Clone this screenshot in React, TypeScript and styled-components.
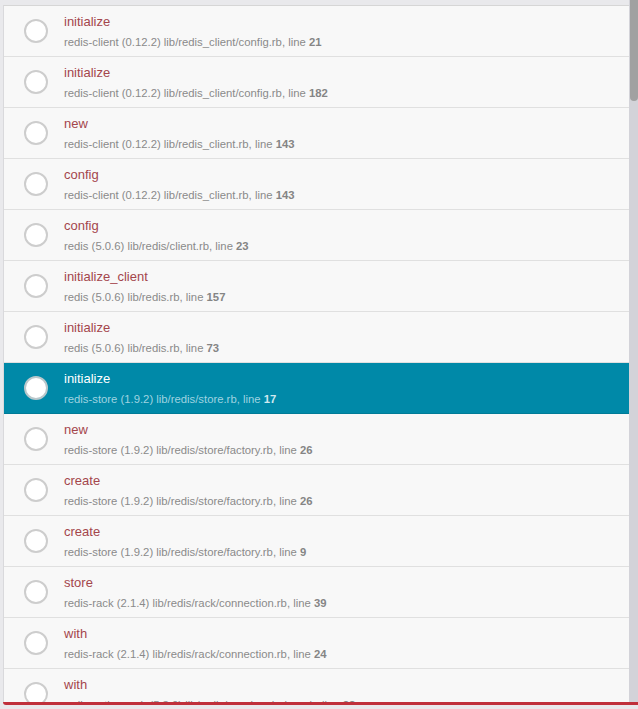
import React from "react";
import styled, { createGlobalStyle } from "styled-components";

const GlobalStyle = createGlobalStyle`
  html, body {
    margin: 0;
    padding: 0;
    background: #e9e9ec;
    font-family: "Liberation Sans", Arial, sans-serif;
  }
`;

type Frame = {
  method: string;
  gem: string;
  file: string;
  line: number;
};

const frames: Frame[] = [
  { method: "initialize", gem: "redis-client (0.12.2)", file: "lib/redis_client/config.rb", line: 21 },
  { method: "initialize", gem: "redis-client (0.12.2)", file: "lib/redis_client/config.rb", line: 182 },
  { method: "new", gem: "redis-client (0.12.2)", file: "lib/redis_client.rb", line: 143 },
  { method: "config", gem: "redis-client (0.12.2)", file: "lib/redis_client.rb", line: 143 },
  { method: "config", gem: "redis (5.0.6)", file: "lib/redis/client.rb", line: 23 },
  { method: "initialize_client", gem: "redis (5.0.6)", file: "lib/redis.rb", line: 157 },
  { method: "initialize", gem: "redis (5.0.6)", file: "lib/redis.rb", line: 73 },
  { method: "initialize", gem: "redis-store (1.9.2)", file: "lib/redis/store.rb", line: 17 },
  { method: "new", gem: "redis-store (1.9.2)", file: "lib/redis/store/factory.rb", line: 26 },
  { method: "create", gem: "redis-store (1.9.2)", file: "lib/redis/store/factory.rb", line: 26 },
  { method: "create", gem: "redis-store (1.9.2)", file: "lib/redis/store/factory.rb", line: 9 },
  { method: "store", gem: "redis-rack (2.1.4)", file: "lib/redis/rack/connection.rb", line: 39 },
  { method: "with", gem: "redis-rack (2.1.4)", file: "lib/redis/rack/connection.rb", line: 24 },
  { method: "with", gem: "redis-actionpack (5.3.0)", file: "lib/redis/session_helper.rb", line: 28 },
];

const SELECTED = 7;

export default function App() {
  return (
    <>
      <GlobalStyle />
      <Page>
        <Main>
          <ListColumn>
            <FrameList>
              {frames.map((f, i) => (
                <FrameRow key={i} $active={i === SELECTED}>
                  <Radio $active={i === SELECTED} />
                  <FrameText>
                    <Method $active={i === SELECTED}>{f.method}</Method>
                    <Location $active={i === SELECTED}>
                      {f.gem} {f.file}, line <strong>{f.line}</strong>
                    </Location>
                  </FrameText>
                </FrameRow>
              ))}
            </FrameList>
          </ListColumn>
          <ScrollTrack>
            <ScrollThumb />
          </ScrollTrack>
        </Main>
        <BottomBar />
      </Page>
    </>
  );
}

const Page = styled.div`
  display: flex;
  flex-direction: column;
  height: 709px;
  overflow: hidden;
`;

const Main = styled.div`
  display: flex;
  height: 702px;
`;

const ListColumn = styled.div`
  flex: 1;
  padding: 5px 0 0 3px;
  overflow: hidden;
`;

const FrameList = styled.div`
  height: 100%;
  background: #f7f7f7;
  border-left: 1px solid #d9d9dc;
  border-top: 1px solid #d6d6d6;
  overflow: hidden;
`;

const FrameRow = styled.div<{ $active: boolean }>`
  display: flex;
  align-items: center;
  height: 50px;
  padding-left: 20px;
  border-bottom: 1px solid ${(p) => (p.$active ? "#007b97" : "#e0e0e0")};
  background: ${(p) => (p.$active ? "#0089a8" : "#f8f8f8")};
  box-sizing: content-box;
`;

const Radio = styled.div<{ $active: boolean }>`
  width: 20px;
  height: 20px;
  border-radius: 50%;
  background: #ffffff;
  border: 2px solid ${(p) => (p.$active ? "#b9c7cb" : "#cdcdcd")};
  flex-shrink: 0;
`;

const FrameText = styled.div`
  display: flex;
  flex-direction: column;
  margin-left: 16px;
`;

const Method = styled.div<{ $active: boolean }>`
  font-size: 13px;
  line-height: 16px;
  color: ${(p) => (p.$active ? "#ffffff" : "#a4464c")};
`;

const Location = styled.div<{ $active: boolean }>`
  font-size: 11.3px;
  line-height: 14px;
  margin-top: 5px;
  color: ${(p) => (p.$active ? "#9fd3e0" : "#8a8a8a")};

  strong {
    font-weight: bold;
    color: ${(p) => (p.$active ? "#cfe9f0" : "#858585")};
  }
`;

const ScrollTrack = styled.div`
  width: 9px;
  background: #d3d3d9;
`;

const ScrollThumb = styled.div`
  width: 8px;
  margin-left: 1px;
  height: 101px;
  background: #a1a1a1;
  border-radius: 0 0 4px 4px;
`;

const BottomBar = styled.div`
  height: 3px;
  margin-left: 3px;
  background: #c0303b;
  border-bottom-left-radius: 3px;
`;
